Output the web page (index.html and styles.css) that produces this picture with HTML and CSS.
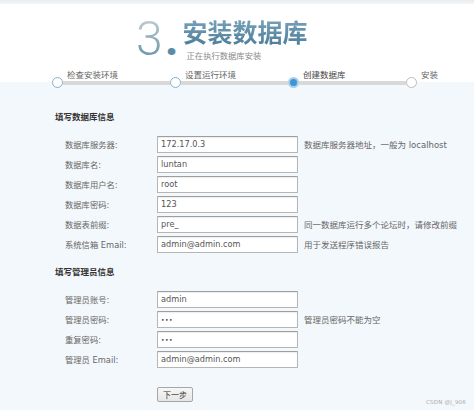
FILE: index.html
```html
<!DOCTYPE html>
<html lang="zh-CN">
<head>
<meta charset="utf-8">
<title>安装数据库</title>
<link rel="stylesheet" href="styles.css">
</head>
<body>
<div class="topbar"></div>
<header class="head">
  <div class="num"><span class="digit">3</span><span class="dot">.</span></div>
  <div class="title-block">
    <h1 class="title">安装数据库</h1>
    <p class="subtitle">正在执行数据库安装</p>
  </div>
</header>
<nav class="progress">
  <div class="step done">
    <span class="step-label">检查安装环境</span>
    <div class="step-track"><span class="step-dot"></span><span class="step-line"></span></div>
  </div>
  <div class="step done">
    <span class="step-label">设置运行环境</span>
    <div class="step-track"><span class="step-dot"></span><span class="step-line"></span></div>
  </div>
  <div class="step current">
    <span class="step-label">创建数据库</span>
    <div class="step-track"><span class="step-dot"></span><span class="step-line"></span></div>
  </div>
  <div class="step todo last">
    <span class="step-label">安装</span>
    <div class="step-track"><span class="step-dot"></span></div>
  </div>
</nav>
<main class="form">
  <h2 class="section">填写数据库信息</h2>
  <div class="rows">
    <div class="row"><label class="lbl">数据库服务器:</label><input class="field" type="text" value="172.17.0.3"><span class="hint">数据库服务器地址，一般为 localhost</span></div>
    <div class="row"><label class="lbl">数据库名:</label><input class="field" type="text" value="luntan"></div>
    <div class="row"><label class="lbl">数据库用户名:</label><input class="field" type="text" value="root"></div>
    <div class="row"><label class="lbl">数据库密码:</label><input class="field" type="text" value="123"></div>
    <div class="row"><label class="lbl">数据表前缀:</label><input class="field" type="text" value="pre_"><span class="hint">同一数据库运行多个论坛时，请修改前缀</span></div>
    <div class="row"><label class="lbl">系统信箱 Email:</label><input class="field" type="text" value="admin@admin.com"><span class="hint">用于发送程序错误报告</span></div>
  </div>
  <h2 class="section second">填写管理员信息</h2>
  <div class="rows admin">
    <div class="row"><label class="lbl">管理员账号:</label><input class="field" type="text" value="admin"></div>
    <div class="row"><label class="lbl">管理员密码:</label><input class="field" type="password" value="123"><span class="hint">管理员密码不能为空</span></div>
    <div class="row"><label class="lbl">重复密码:</label><input class="field" type="password" value="123"></div>
    <div class="row"><label class="lbl">管理员 Email:</label><input class="field" type="text" value="admin@admin.com"></div>
  </div>
  <div class="actions"><button class="btn" type="button">下一步</button></div>
</main>
<div class="watermark">CSDN @J_906</div>
</body>
</html>
```

FILE: styles.css
```css
* { box-sizing: border-box; }

html, body {
  margin: 0;
  padding: 0;
}

body {
  width: 474px;
  height: 410px;
  overflow: hidden;
  position: relative;
  background: #f3f8fc;
  font-family: "DejaVu Sans", "Noto Sans CJK SC", sans-serif;
  color: #555;
}

.topbar {
  height: 4px;
  background: linear-gradient(#e9edf0, #f4f6f8);
}

.head {
  height: 65px;
  background: #fff;
  display: flex;
  align-items: flex-start;
  padding: 11px 0 0 136px;
}

.num {
  font-family: "Roboto", "DejaVu Sans", sans-serif;
  font-weight: 300;
  font-size: 48px;
  line-height: 48px;
  display: flex;
}

.digit {
  background: linear-gradient(#c9d3d8 0%, #98b0bd 45%, #5f8ea8 100%);
  -webkit-background-clip: text;
  background-clip: text;
  color: transparent;
}

.dot {
  color: #5b8ba6;
  font-weight: 700;
  margin-left: 2px;
}

.title-block {
  margin: 2px 0 0 4px;
}

.title {
  margin: 0;
  font-family: "Noto Sans CJK SC", sans-serif;
  font-weight: 700;
  font-size: 25px;
  line-height: 28px;
  background: linear-gradient(#7aa4bb, #4f7f9b);
  -webkit-background-clip: text;
  background-clip: text;
  color: transparent;
}

.subtitle {
  margin: 5px 0 0 4px;
  font-family: "Noto Sans CJK SC", sans-serif;
  font-size: 8.3px;
  line-height: 10px;
  color: #8a8a8a;
}

.progress {
  display: flex;
  padding-left: 52px;
  background: linear-gradient(#fff 13px, #f3f8fc 13px);
}

.step {
  width: 118px;
  display: flex;
  flex-direction: column;
}

.step.last { width: 60px; }

.step-label {
  padding-left: 15px;
  font-family: "Noto Sans CJK SC", sans-serif;
  font-size: 8.5px;
  line-height: 10px;
  color: #666;
  white-space: nowrap;
}

.step.current .step-label { color: #444; }

.step-track {
  display: flex;
  align-items: center;
  height: 11px;
  margin-top: -2px;
}

.step-dot {
  flex: none;
  width: 11px;
  height: 11px;
  border-radius: 50%;
  background: #fff;
  border: 1.5px solid #86b2cf;
}

.step.current .step-dot {
  background: #3d95d8;
  border: 2px solid #a9cde9;
}

.step.todo .step-dot {
  border-color: #bcbcbc;
}

.step-line {
  flex: 1;
  height: 4px;
  background: #d9d9d9;
}

.form {
  padding: 22px 0 0 55px;
}

.section {
  margin: 0;
  font-family: "Noto Sans CJK SC", sans-serif;
  font-size: 8.5px;
  line-height: 12px;
  font-weight: 700;
  color: #333;
}

.section.second { margin-top: 11px; }

.rows {
  margin-top: 12px;
  padding-left: 10px;
}

.rows.admin { margin-top: 12px; }

.row {
  display: flex;
  align-items: center;
  height: 20px;
}

.lbl {
  width: 92px;
  flex: none;
  font-size: 8.3px;
  color: #666;
  white-space: nowrap;
}

.field {
  flex: none;
  width: 141px;
  height: 17px;
  margin: 0;
  padding: 0 3px;
  border: 1px solid #b5b5b5;
  border-top-color: #9e9e9e;
  border-radius: 1px;
  background: #fff;
  box-shadow: inset 0 1px 1px rgba(0,0,0,0.07);
  font-family: "DejaVu Sans", sans-serif;
  font-size: 8.2px;
  color: #555;
  outline: none;
}

.field[type="password"] {
  font-size: 6px;
  letter-spacing: 0.5px;
  color: #333;
}

.hint {
  margin-left: 6px;
  font-size: 8.5px;
  color: #666;
  white-space: nowrap;
}

.actions {
  display: flex;
  padding-left: 102px;
  margin-top: 18px;
}

.btn {
  width: 36px;
  height: 15px;
  padding: 0;
  margin: 0;
  font-family: "Noto Sans CJK SC", sans-serif;
  font-size: 8px;
  line-height: 13px;
  color: #333;
  background: linear-gradient(#f7f7f7, #e6e6e6);
  border: 1px solid #a6a6a6;
  border-radius: 2px;
}

.watermark {
  position: absolute;
  right: 8px;
  bottom: 5px;
  font-family: "DejaVu Sans", sans-serif;
  font-size: 5.5px;
  color: #a9a9a9;
  letter-spacing: 0.2px;
}
```
